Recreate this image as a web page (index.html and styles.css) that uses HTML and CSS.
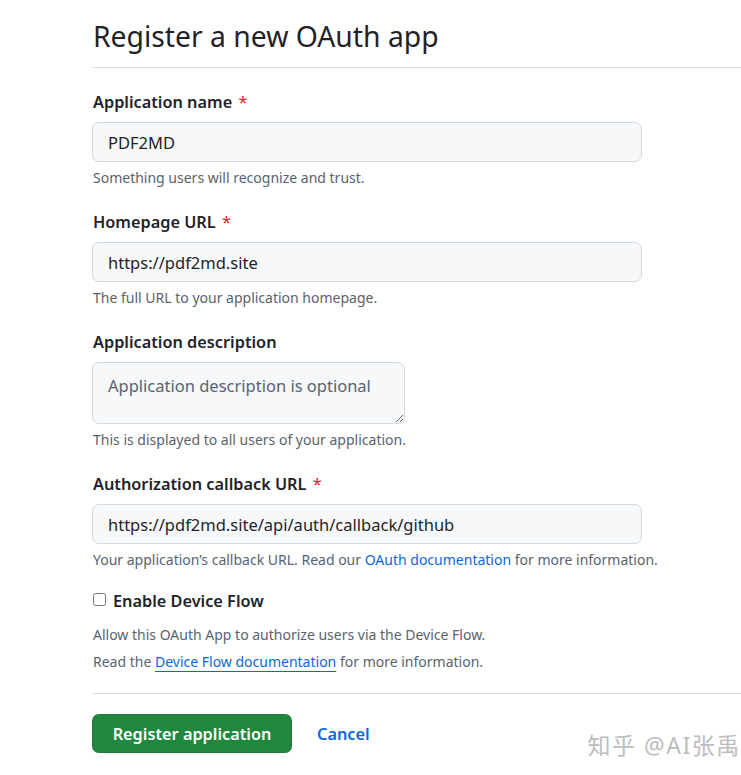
FILE: index.html
```html
<!DOCTYPE html>
<html lang="en">
<head>
<meta charset="utf-8">
<title>Register a new OAuth app</title>
<link rel="stylesheet" href="styles.css">
</head>
<body>
<main class="page">
  <h1 class="title">Register a new OAuth app</h1>
  <form class="form">
    <div class="field">
      <label class="label">Application name <span class="req">*</span></label>
      <input class="input" type="text" value="PDF2MD">
      <p class="note">Something users will recognize and trust.</p>
    </div>
    <div class="field">
      <label class="label">Homepage URL <span class="req">*</span></label>
      <input class="input" type="text" value="https://pdf2md.site">
      <p class="note">The full URL to your application homepage.</p>
    </div>
    <div class="field">
      <label class="label">Application description</label>
      <textarea class="textarea" placeholder="Application description is optional"></textarea>
      <p class="note">This is displayed to all users of your application.</p>
    </div>
    <div class="field">
      <label class="label">Authorization callback URL <span class="req">*</span></label>
      <input class="input" type="text" value="https://pdf2md.site/api/auth/callback/github">
      <p class="note">Your application’s callback URL. Read our <a class="link" href="#">OAuth documentation</a> for more information.</p>
    </div>
    <div class="check-field">
      <label class="check-label"><input class="checkbox" type="checkbox"> Enable Device Flow</label>
      <p class="note">Allow this OAuth App to authorize users via the Device Flow.</p>
      <p class="note">Read the <a class="link underline" href="#">Device Flow documentation</a> for more information.</p>
    </div>
    <div class="actions">
      <button class="btn-primary" type="button">Register application</button>
      <a class="cancel" href="#">Cancel</a>
      <span class="watermark">知乎 @AI张禹</span>
    </div>
  </form>
</main>
</body>
</html>
```

FILE: styles.css
```css
* { box-sizing: border-box; }
html, body { margin: 0; padding: 0; background: #fff; }
body {
  font-family: "Noto Sans", "Noto Sans CJK SC", sans-serif;
  color: #1f2328;
  overflow: hidden;
}
.page {
  padding: 14px 0 0 92px;
}
.title {
  margin: 0;
  font-size: 28.3px;
  font-weight: 400;
  line-height: 44px;
  padding-bottom: 9px;
  border-bottom: 1px solid #d8dee4;
  padding-left: 1px;
}
.form { padding-top: 22px; }
.field { margin-bottom: 22px; }
.label {
  display: block;
  font-size: 16.3px;
  font-weight: 600;
  line-height: 24px;
  margin-bottom: 8px;
  padding-left: 1px;
}
.req { color: #d1242f; font-weight: 400; margin-left: 2px; }
.input, .textarea {
  display: block;
  width: 550px;
  height: 40px;
  padding: 0 15px;
  font-family: inherit;
  font-size: 16.5px;
  color: #1f2328;
  background: #f6f8fa;
  border: 1px solid #d1d9e0;
  border-radius: 7px;
  outline: none;
}
.textarea {
  width: 313px;
  height: 62px;
  padding: 11px 15px;
  resize: vertical;
  line-height: 24px;
}
.textarea::placeholder { color: #59636e; opacity: 1; }
.note {
  margin: 6px 0 0;
  font-size: 14px;
  line-height: 20px;
  color: #59636e;
  padding-left: 1px;
}
.link { color: #0969da; text-decoration: none; }
.underline { text-decoration: underline; text-underline-offset: 4px; }
.check-field { margin-top: -3px; }
.check-label {
  display: flex;
  align-items: center;
  gap: 7px;
  font-size: 16.3px;
  font-weight: 600;
  line-height: 24px;
  margin-bottom: 8px;
}
.checkbox {
  margin: -4px 0 0 1px;
  width: 13px;
  height: 13px;
}
.check-field .note { margin-top: 0; line-height: 27px; }
.actions {
  margin-top: 18px;
  border-top: 1px solid #d8dee4;
  padding-top: 20px;
  display: flex;
  align-items: flex-start;
  gap: 25px;
}
.btn-primary {
  height: 39px;
  width: 200px;
  background: #1f883d;
  color: #fff;
  border: 1px solid rgba(31,35,40,0.15);
  border-radius: 7px;
  font-family: inherit;
  font-size: 16.3px;
  font-weight: 600;
}
.cancel {
  color: #0969da;
  font-size: 16.3px;
  font-weight: 600;
  line-height: 41px;
  text-decoration: none;
}
.watermark {
  margin-left: 193px;
  margin-top: 18px;
  line-height: 27px;
  font-size: 23px;
  letter-spacing: 1.5px;
  color: #bdbdbd;
  white-space: nowrap;
}
```
